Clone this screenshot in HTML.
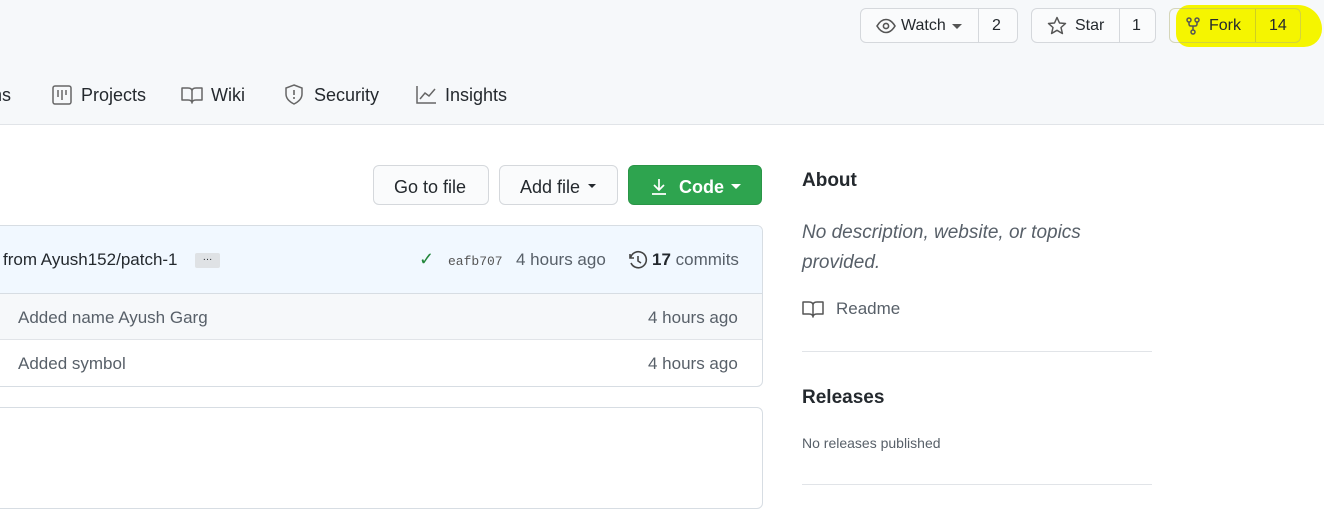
<!DOCTYPE html><html><head><style>
body{margin:0;width:1324px;height:490px;overflow:hidden;background:#fff;font-family:"Liberation Sans",sans-serif;color:#24292e;position:relative}
.hdr{position:absolute;left:0;top:0;width:1324px;height:124px;background:#f6f8fa;border-bottom:1px solid #e1e4e8}
.a{position:absolute;white-space:nowrap}
.btn{position:absolute;border:1px solid #d5d8dc;border-radius:6px;background:#fafbfc;box-sizing:border-box;font-size:16px}
.tab{position:absolute;top:85px;font-size:18px;color:#24292e;white-space:nowrap}
.sep{position:absolute;top:0;bottom:0;width:1px;background:#d5d8dc}
</style></head><body>
<div class="hdr"></div>
<div class="a" style="left:1176px;top:5px;width:146px;height:42px;background:#f5f500;border-radius:22px 40px 30px 22px"></div>
<div class="btn" style="left:860px;top:8px;width:158px;height:35px"><div class="sep" style="left:117px"></div>
<svg class="a" style="left:15px;top:9px" width="20" height="16" viewBox="0 0 20 16"><path d="M1 8C4 3 7 1.5 10 1.5S16 3 19 8C16 13 13 14.5 10 14.5S4 13 1 8Z" fill="none" stroke="#555" stroke-width="1.6"/><circle cx="10" cy="8" r="2.6" fill="none" stroke="#555" stroke-width="1.6"/></svg>
<span class="a" style="left:40px;top:8px">Watch</span><span class="a" style="left:91px;top:15px;border:5px solid transparent;border-top-color:#555;border-bottom:0"></span><span class="a" style="left:131px;top:8px">2</span></div>
<div class="btn" style="left:1031px;top:8px;width:125px;height:35px;background:#fafbfc"><div class="sep" style="left:87px"></div>
<svg class="a" style="left:15px;top:7px" width="20" height="19" viewBox="0 0 20 19"><path d="M10 1.5L12.5 7L18.5 7.5L14 11.5L15.4 17.5L10 14.3L4.6 17.5L6 11.5L1.5 7.5L7.5 7Z" fill="none" stroke="#555" stroke-width="1.5" stroke-linejoin="round"/></svg>
<span class="a" style="left:43px;top:8px">Star</span><span class="a" style="left:100px;top:8px">1</span></div>
<div class="btn" style="left:1169px;top:8px;width:132px;height:35px;background:transparent;border-color:rgba(180,180,120,.5)"><div class="sep" style="left:85px;background:rgba(150,150,80,.4)"></div>
<svg class="a" style="left:16px;top:8px" width="14" height="18" viewBox="0 0 14 18"><circle cx="3" cy="3" r="2" fill="none" stroke="#555" stroke-width="1.5"/><circle cx="11" cy="3" r="2" fill="none" stroke="#555" stroke-width="1.5"/><circle cx="7" cy="15" r="2" fill="none" stroke="#555" stroke-width="1.5"/><path d="M3 5V7Q3 9 5 9H9Q11 9 11 7V5M7 9V13" fill="none" stroke="#555" stroke-width="1.5"/></svg>
<span class="a" style="left:39px;top:8px">Fork</span><span class="a" style="left:99px;top:8px">14</span></div>
<span class="tab" style="left:-8px">ns</span>
<svg class="a" style="left:52px;top:85px" width="20" height="20" viewBox="0 0 20 20"><rect x="1" y="1" width="18" height="18" rx="2" fill="none" stroke="#666" stroke-width="1.5"/><path d="M6 5V12M10 5V15M14 5V10" stroke="#666" stroke-width="1.5"/></svg>
<span class="tab" style="left:81px">Projects</span>
<svg class="a" style="left:181px;top:86px" width="22" height="18" viewBox="0 0 22 18"><path d="M1 2H7Q11 2 11 5V17Q11 14 7 14H1ZM21 2H15Q11 2 11 5V17Q11 14 15 14H21Z" fill="none" stroke="#666" stroke-width="1.5" stroke-linejoin="round"/></svg>
<span class="tab" style="left:211px">Wiki</span>
<svg class="a" style="left:285px;top:84px" width="18" height="21" viewBox="0 0 18 21"><path d="M9 1L17 4V10Q17 16 9 20Q1 16 1 10V4Z" fill="none" stroke="#666" stroke-width="1.5"/><path d="M9 6V11M9 13V15" stroke="#666" stroke-width="1.6"/></svg>
<span class="tab" style="left:314px">Security</span>
<svg class="a" style="left:416px;top:85px" width="21" height="19" viewBox="0 0 21 19"><path d="M1 1V18H20M4 14L9 8L13 11L19 4" fill="none" stroke="#666" stroke-width="1.5"/></svg>
<span class="tab" style="left:445px">Insights</span>
<div class="btn" style="left:373px;top:165px;width:116px;height:40px;font-size:18px"><span class="a" style="left:20px;top:11px">Go to file</span></div>
<div class="btn" style="left:499px;top:165px;width:119px;height:40px;font-size:18px"><span class="a" style="left:20px;top:11px">Add file</span><span class="a" style="left:88px;top:18px;border:4px solid transparent;border-top-color:#24292e;border-bottom:0"></span></div>
<div class="btn" style="left:628px;top:165px;width:134px;height:40px;font-size:18px;background:#2ea44f;border-color:#2a9547;color:#fff">
<svg class="a" style="left:22px;top:12px" width="16" height="17" viewBox="0 0 16 17"><path d="M8 1V11M3 7L8 12L13 7M1 16H15" fill="none" stroke="#fff" stroke-width="1.7"/></svg>
<span class="a" style="left:50px;top:11px;font-weight:bold">Code</span><span class="a" style="left:102px;top:18px;border:5px solid transparent;border-top-color:#fff;border-bottom:0"></span></div>
<div class="a" style="left:-10px;top:225px;width:771px;height:160px;border:1px solid #d7dde3;border-radius:6px;overflow:hidden">
<div class="a" style="left:0;top:0;right:0;height:67px;background:#f1f8ff;border-bottom:1px solid #d7dde3"></div>
<div class="a" style="left:0;top:68px;right:0;height:45px;background:#f6f8fa;border-bottom:1px solid #e1e4e8"></div>
</div>
<span class="a" style="left:3px;top:250px;font-size:17px">from Ayush152/patch-1</span>
<span class="a" style="left:195px;top:253px;width:25px;height:15px;background:#dfe2e5;border-radius:2px;font-size:10px;text-align:center;line-height:10px">…</span>
<span class="a" style="left:419px;top:249px;font-size:18px;color:#22863a">✓</span>
<span class="a" style="left:448px;top:254px;font-family:'Liberation Mono',monospace;font-size:13px;color:#555">eafb707</span>
<span class="a" style="left:516px;top:250px;font-size:17px;color:#586069">4 hours ago</span>
<svg class="a" style="left:627px;top:250px" width="21" height="20" viewBox="0 0 21 20"><path d="M3 4V8H7" fill="none" stroke="#444" stroke-width="1.6"/><path d="M3.5 8A8 8 0 1 1 4 13" fill="none" stroke="#444" stroke-width="1.6"/><path d="M11 6V11L14 13" fill="none" stroke="#444" stroke-width="1.6"/></svg>
<span class="a" style="left:652px;top:250px;font-size:17px"><b>17</b> <span style="color:#586069">commits</span></span>
<span class="a" style="left:18px;top:308px;font-size:17px;color:#586069">Added name Ayush Garg</span>
<span class="a" style="left:648px;top:308px;font-size:17px;color:#586069">4 hours ago</span>
<span class="a" style="left:18px;top:354px;font-size:17px;color:#586069">Added symbol</span>
<span class="a" style="left:648px;top:354px;font-size:17px;color:#586069">4 hours ago</span>
<div class="a" style="left:-10px;top:407px;width:771px;height:100px;border:1px solid #d7dde3;border-radius:6px"></div>
<span class="a" style="left:802px;top:170px;font-size:19px;font-weight:bold">About</span>
<div class="a" style="left:802px;top:218px;font-size:19px;font-style:italic;color:#586069;line-height:30px;white-space:normal;width:330px">No description, website, or topics provided.</div>
<svg class="a" style="left:802px;top:300px" width="22" height="18" viewBox="0 0 22 18"><path d="M1 2H7Q11 2 11 5V17Q11 14 7 14H1ZM21 2H15Q11 2 11 5V17Q11 14 15 14H21Z" fill="none" stroke="#555" stroke-width="1.5" stroke-linejoin="round"/></svg>
<span class="a" style="left:836px;top:299px;font-size:17px;color:#586069">Readme</span>
<div class="a" style="left:802px;top:351px;width:350px;height:1px;background:#e1e4e8"></div>
<span class="a" style="left:802px;top:387px;font-size:19px;font-weight:bold">Releases</span>
<span class="a" style="left:802px;top:435px;font-size:14px;color:#586069">No releases published</span>
<div class="a" style="left:802px;top:484px;width:350px;height:1px;background:#e1e4e8"></div>
</body></html>
